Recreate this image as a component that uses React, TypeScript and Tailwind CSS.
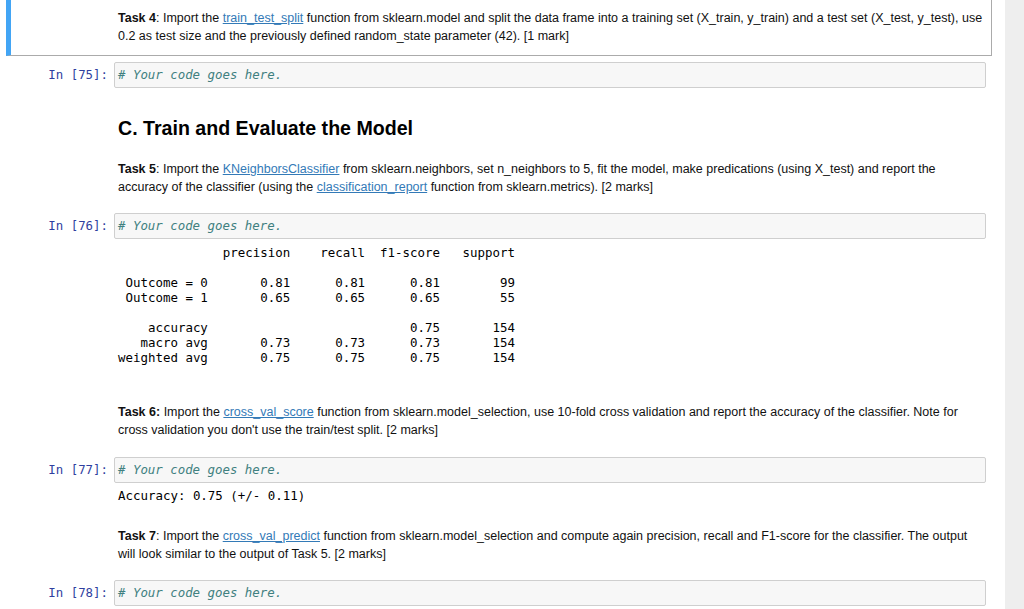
import React from 'react';

const sans = { fontFamily: '"Liberation Sans", Arial, sans-serif' };
const mono = { fontFamily: '"DejaVu Sans Mono", "Liberation Mono", monospace' };

function A({ children }: { children: React.ReactNode }) {
  return <span className="text-[#337ab7] underline">{children}</span>;
}

function CodeCell({ n, className = '' }: { n: number; className?: string }) {
  return (
    <div className={`flex items-center ${className}`} style={mono}>
      <div className="w-[102px] shrink-0 text-right text-[12.4px] text-[#303F9F]">In [{n}]:</div>
      <div className="ml-[6px] mr-[6px] flex h-[26px] flex-1 items-center rounded-[2px] border border-[#cfcfcf] bg-[#f7f7f7] pl-[3px] text-[12.4px] italic text-[#408080]">
        # Your code goes here.
      </div>
    </div>
  );
}

const report = `              precision    recall  f1-score   support

 Outcome = 0       0.81      0.81      0.81        99
 Outcome = 1       0.65      0.65      0.65        55

    accuracy                           0.75       154
   macro avg       0.73      0.73      0.73       154
weighted avg       0.75      0.75      0.75       154`;

export default function App() {
  return (
    <div className="flex h-[609px] w-[1024px] overflow-hidden bg-white text-black">
      <div className="ml-[6px] flex w-[986px] flex-col">
        {/* selected markdown cell */}
        <div
          className="h-[56px] shrink-0 whitespace-nowrap border-b border-l-[5px] border-r border-b-[#ababab] border-l-[#42A5F5] border-r-[#ababab] pl-[107px] pt-[9px] text-[12.5px] leading-[18px] text-[#111]"
          style={sans}
        >
          <b>Task 4</b>: Import the <A>train_test_split</A> function from sklearn.model and split the data frame into a training set (X_train, y_train) and a test set (X_test, y_test), use
          <br />
          0.2 as test size and the previously defined random_state parameter (42). [1 mark]
        </div>

        <CodeCell n={75} className="mt-[6px]" />

        <div className="mt-[28px] pl-[112px] text-[19.6px] font-bold leading-[24px]" style={sans}>
          C. Train and Evaluate the Model
        </div>

        <div className="mt-[20px] whitespace-nowrap pl-[112px] text-[12.5px] leading-[18px] text-[#111]" style={sans}>
          <b>Task 5</b>: Import the <A>KNeighborsClassifier</A> from sklearn.neighbors, set n_neighbors to 5, fit the model, make predications (using X_test) and report the
          <br />
          accuracy of the classifier (using the <A>classification_report</A> function from sklearn.metrics). [2 marks]
        </div>

        <CodeCell n={76} className="mt-[17px]" />

        <pre className="mt-[6px] pl-[112px] text-[12.45px] leading-[15px]" style={mono}>
          {report}
        </pre>

        <div className="mt-[38px] whitespace-nowrap pl-[112px] text-[12.5px] leading-[18px] text-[#111]" style={sans}>
          <b>Task 6:</b> Import the <A>cross_val_score</A> function from sklearn.model_selection, use 10-fold cross validation and report the accuracy of the classifier. Note for
          <br />
          cross validation you don't use the train/test split. [2 marks]
        </div>

        <CodeCell n={77} className="mt-[18px]" />

        <pre className="mt-[5px] pl-[112px] text-[12.45px] leading-[15px]" style={mono}>
          Accuracy: 0.75 (+/- 0.11)
        </pre>

        <div className="mt-[24px] whitespace-nowrap pl-[112px] text-[12.5px] leading-[18px] text-[#111]" style={sans}>
          <b>Task 7</b>: Import the <A>cross_val_predict</A> function from sklearn.model_selection and compute again precision, recall and F1-score for the classifier. The output
          <br />
          will look similar to the output of Task 5. [2 marks]
        </div>

        <CodeCell n={78} className="mt-[17px]" />
      </div>
      <div className="ml-auto w-[19px] shrink-0 bg-[#eeeeee]" />
    </div>
  );
}
